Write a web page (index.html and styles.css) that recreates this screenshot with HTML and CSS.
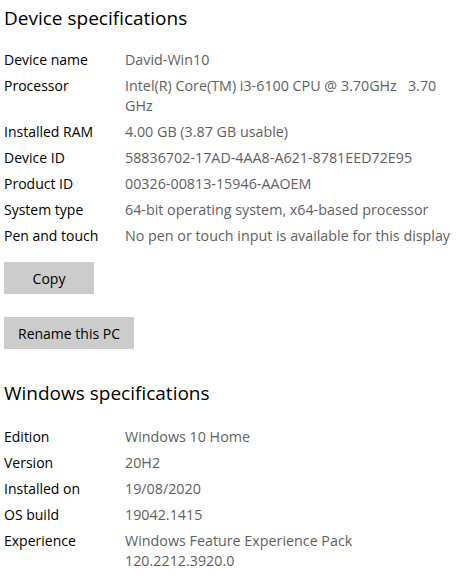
FILE: index.html
```html
<!DOCTYPE html>
<html>
<head>
<meta charset="utf-8">
<link rel="stylesheet" href="styles.css">
</head>
<body>
<main class="page">
  <section class="block">
    <h2 class="heading">Device specifications</h2>
    <dl class="specs specs-device">
      <dt>Device name</dt><dd>David-Win10</dd>
      <dt>Processor</dt><dd>Intel(R) Core(TM) i3-6100 CPU @ 3.70GHz&nbsp;&nbsp; 3.70 GHz</dd>
      <dt>Installed RAM</dt><dd>4.00 GB (3.87 GB usable)</dd>
      <dt>Device ID</dt><dd>58836702-17AD-4AA8-A621-8781EED72E95</dd>
      <dt>Product ID</dt><dd>00326-00813-15946-AAOEM</dd>
      <dt>System type</dt><dd>64-bit operating system, x64-based processor</dd>
      <dt>Pen and touch</dt><dd>No pen or touch input is available for this display</dd>
    </dl>
    <div class="actions">
      <button class="btn btn-copy">Copy</button>
      <button class="btn">Rename this PC</button>
    </div>
  </section>
  <section class="block block-win">
    <h2 class="heading">Windows specifications</h2>
    <dl class="specs specs-win">
      <dt>Edition</dt><dd>Windows 10 Home</dd>
      <dt>Version</dt><dd>20H2</dd>
      <dt>Installed on</dt><dd>19/08/2020</dd>
      <dt>OS build</dt><dd>19042.1415</dd>
      <dt>Experience</dt><dd>Windows Feature Experience Pack<br>120.2212.3920.0</dd>
    </dl>
  </section>
</main>
</body>
</html>
```
FILE: styles.css
```css
* { box-sizing: border-box; }
html, body {
  margin: 0;
  padding: 0;
  background: #ffffff;
}
body {
  font-family: "Open Sans", "Noto Sans", sans-serif;
  font-size: 14px;
  color: #000000;
}
.page {
  padding: 4px 0 0 4px;
  width: 473px;
}
.heading {
  margin: 0;
  font-size: 19px;
  font-weight: 400;
  line-height: 28px;
  color: #000;
}
.specs {
  margin: 20px 0 0 0;
  display: grid;
  grid-template-columns: 121px 330px;
  row-gap: 6px;
  line-height: 20px;
}
.specs-device { margin-top: 18px; }
.specs dt { margin: 0; color: #000; }
.specs dd { margin: 0; color: #5f5f5f; font-size: 14.3px; }
.actions {
  display: flex;
  flex-direction: column;
  align-items: flex-start;
  gap: 23px;
  margin-top: 16px;
}
.btn {
  font-family: inherit;
  font-size: 14px;
  color: #000;
  background: #cccccc;
  border: none;
  height: 32px;
  padding: 0 14px;
  margin: 0;
}
.btn-copy { width: 90px; }
.block-win { margin-top: 30px; }
```
